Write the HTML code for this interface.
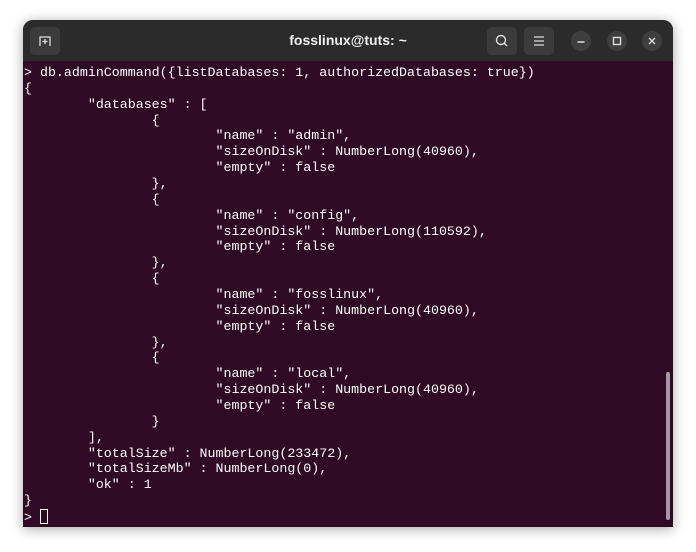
<!DOCTYPE html>
<html><head><style>
body{margin:0;width:696px;height:552px;background:#fff;overflow:hidden;position:relative;font-family:"Liberation Sans",sans-serif}
.win{position:absolute;left:23px;top:20px;width:650px;height:507px;border-radius:10px 10px 0 0;overflow:hidden;background:#300a24;box-shadow:0 2px 12px rgba(0,0,0,.35)}
.hdr{position:absolute;left:0;top:0;width:650px;height:41px;background:#2b2b2b;}
.title{position:absolute;left:0;width:650px;top:12px;text-align:center;color:#f0f0f0;font-weight:bold;font-size:14px}
.btn{position:absolute;top:7px;width:30px;height:28px;border-radius:5px;background:#3b3b3b}
.circ{position:absolute;top:11px;width:20px;height:20px;border-radius:50%;background:#3e3e3e}
pre{position:absolute;left:1px;top:45px;margin:0;color:#fff;font-family:"Liberation Mono",monospace;font-size:13.3px;line-height:15.86px;tab-size:8}
.cur{display:inline-block;width:8px;height:15px;border:1px solid #fff;vertical-align:-3px;box-sizing:border-box}
.sb{position:absolute;left:643px;top:352px;width:4px;height:148px;border-radius:2px;background:#a09aa0}
</style></head><body>
<div class="win">
<div class="hdr">
<div class="btn" style="left:7px"><svg width="30" height="28"><path d="M10 19V10h10v9M15 12v5M12.5 14.5h5" stroke="#ddd" stroke-width="1.3" fill="none"/></svg></div>
<div class="title">fosslinux@tuts: ~</div>
<div class="btn" style="left:464px"><svg width="30" height="28"><circle cx="14" cy="13" r="4.5" stroke="#ddd" stroke-width="1.4" fill="none"/><path d="M17.3 16.3L20 19" stroke="#ddd" stroke-width="1.4"/></svg></div>
<div class="btn" style="left:501px"><svg width="30" height="28"><path d="M10 10h10M10 14h10M10 18h10" stroke="#ddd" stroke-width="1.3"/></svg></div>
<div class="circ" style="left:548px"><svg width="20" height="20"><path d="M6.5 11h7" stroke="#ddd" stroke-width="1.4"/></svg></div>
<div class="circ" style="left:584px"><svg width="20" height="20"><rect x="6.5" y="6.5" width="7" height="7" stroke="#ddd" stroke-width="1.4" fill="none"/></svg></div>
<div class="circ" style="left:619px"><svg width="20" height="20"><path d="M7 7l6 6M13 7l-6 6" stroke="#ddd" stroke-width="1.4"/></svg></div>
</div>
<pre>&gt; db.adminCommand({listDatabases: 1, authorizedDatabases: true})
{
	"databases" : [
		{
			"name" : "admin",
			"sizeOnDisk" : NumberLong(40960),
			"empty" : false
		},
		{
			"name" : "config",
			"sizeOnDisk" : NumberLong(110592),
			"empty" : false
		},
		{
			"name" : "fosslinux",
			"sizeOnDisk" : NumberLong(40960),
			"empty" : false
		},
		{
			"name" : "local",
			"sizeOnDisk" : NumberLong(40960),
			"empty" : false
		}
	],
	"totalSize" : NumberLong(233472),
	"totalSizeMb" : NumberLong(0),
	"ok" : 1
}
&gt; <span class="cur"></span></pre>
<div class="sb"></div>
</div>
</body></html>
